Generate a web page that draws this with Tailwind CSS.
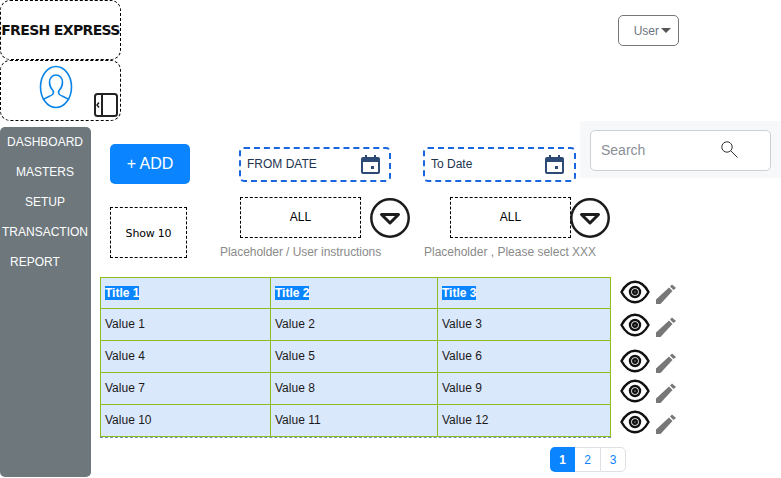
<!DOCTYPE html>
<html>
<head>
<meta charset="utf-8">
<script src="https://cdn.jsdelivr.net/npm/@tailwindcss/browser@4"></script>
</head>
<body class="bg-white">
<div class="w-[781px] h-[478px] overflow-hidden bg-white font-['Liberation_Sans',sans-serif] flex flex-col">
  <!-- top -->
  <div class="flex h-[121px] shrink-0">
    <div class="w-[121px] flex flex-col">
      <div class="h-[60px] border border-dashed border-black rounded-[10px] flex items-center justify-center font-['DejaVu_Sans',sans-serif] font-bold text-[14px] tracking-[-0.65px] text-[#111] whitespace-nowrap">FRESH EXPRESS</div>
      <div class="h-[61px] border border-dashed border-black rounded-[10px] relative flex justify-center pt-[4px] pr-[10px]">
        <svg width="34" height="44" viewBox="0 0 34 44" fill="none" stroke="#0a84e8" stroke-width="1.6">
          <ellipse cx="17" cy="22" rx="15.5" ry="20.5"/>
          <path d="M4 35c3-3 9-4 10-6 .5-1 .5-3-.5-4-2-2-3-5-3-8 0-4 3-7 6.500-7s6.500 3 6.500 7c0 3-1 6-3 8-1 1-1 3-.5 4 1 2 7 3 10 6"/>
        </svg>
        <svg class="absolute left-[92px] top-[31px]" width="26" height="26" viewBox="0 0 26 26" fill="none" stroke="#222" stroke-width="2">
          <rect x="2" y="2" width="22" height="22" rx="2.500"/>
          <path d="M9 2v22"/>
          <path d="M6 10.500 4 13l2 2.500" stroke-width="1.500"/>
        </svg>
      </div>
    </div>
    <div class="ml-[497px] mt-[15px]">
      <div class="w-[61px] h-[31px] border border-[#777] rounded-[5px] flex items-center justify-end pr-[7px] gap-[2px] text-[12px] text-[#6c757d]">
        <span>User</span>
        <span class="w-0 h-0 border-l-[5px] border-r-[5px] border-t-[5px] border-l-transparent border-r-transparent border-t-[#555]"></span>
      </div>
    </div>
  </div>
  <!-- body -->
  <div class="flex flex-1 min-h-0">
    <nav class="w-[91px] h-[350px] mt-[6px] shrink-0 bg-[#6d777c] rounded-[5px] text-white text-[12px] leading-[30px] whitespace-nowrap">
      <div class="h-[30px] pl-[7px]">DASHBOARD</div>
      <div class="h-[30px] pl-[16px]">MASTERS</div>
      <div class="h-[30px] pl-[25px]">SETUP</div>
      <div class="h-[30px] pl-[2px]">TRANSACTION</div>
      <div class="h-[30px] pl-[10px]">REPORT</div>
    </nav>
    <main class="w-[690px] flex flex-col">
      <!-- row 1 -->
      <div class="flex h-[57px] items-start">
        <button class="ml-[19px] mt-[23px] w-[80px] h-[40px] bg-[#0a84ff] rounded-[5px] text-white text-[16px] flex items-center justify-center">+ ADD</button>
        <div class="ml-[49px] mt-[26px] w-[152px] h-[35px] border-2 border-dashed border-[#1a66e0] rounded-[5px] flex items-center justify-between pl-[6px] pr-[9px] text-[12px] text-[#22344f]">
          <span class="mb-[2px]">FROM DATE</span>
          <svg width="19" height="19" viewBox="0 0 19 19" fill="#2c4a75"><path d="M4 0h2v2h7V0h2v2h2a2 2 0 0 1 2 2v13a2 2 0 0 1-2 2H2a2 2 0 0 1-2-2V4a2 2 0 0 1 2-2h2zM2 7v10h15V7z"/><rect x="10" y="11" width="3" height="3"/></svg>
        </div>
        <div class="ml-[32px] mt-[26px] w-[153px] h-[35px] border-2 border-dashed border-[#1a66e0] rounded-[5px] flex items-center justify-between pl-[6px] pr-[10px] text-[12px] text-[#22344f]">
          <span class="mb-[2px]">To Date</span>
          <svg width="19" height="19" viewBox="0 0 19 19" fill="#2c4a75"><path d="M4 0h2v2h7V0h2v2h2a2 2 0 0 1 2 2v13a2 2 0 0 1-2 2H2a2 2 0 0 1-2-2V4a2 2 0 0 1 2-2h2zM2 7v10h15V7z"/><rect x="10" y="11" width="3" height="3"/></svg>
        </div>
        <div class="ml-[4px] w-[201px] h-[57px] bg-[#f7f8fa] pt-[9px] pl-[10px]">
          <div class="w-[181px] h-[41px] bg-white border border-[#ccd0d8] rounded-[5px] flex items-center justify-between pl-[10px] pr-[32px] text-[14px] text-[#8a8f96]">
            <span>Search</span>
            <svg class="mb-[3px]" width="17" height="17" viewBox="0 0 17 17" fill="none" stroke="#333" stroke-width="1"><circle cx="6" cy="6" r="5.200"/><path d="m9.800 9.800 6.700 6.700"/></svg>
          </div>
        </div>
      </div>
      <!-- row 2 -->
      <div class="flex items-start h-[99px]">
        <div class="ml-[19px] mt-[29px] w-[77px] h-[51px] pt-[3px] border border-dashed border-black flex items-center justify-center font-['DejaVu_Sans',sans-serif] text-[11px] tracking-[-0.2px] text-black">Show 10</div>
        <div class="ml-[33px] mt-[19px] relative w-[210px]">
          <div class="flex items-center gap-[9px] ml-[20px]">
            <div class="w-[121px] h-[41px] pb-[2px] border border-dashed border-black flex items-center justify-center text-[12px] text-black">ALL</div>
            <svg width="40" height="40" viewBox="0 0 40 40" fill="none" stroke="#1c1c1c" stroke-width="2.500"><circle cx="20" cy="20" r="18.700"/><path d="M11.500 16.500h17L20 25z" stroke-linejoin="round" stroke-width="3"/></svg>
          </div>
          <div class="mt-[7px] text-[12px] leading-[14px] tracking-[-0.05px] text-[#8a8a8a] whitespace-nowrap">Placeholder / User instructions</div>
        </div>
        <div class="ml-[-6px] mt-[19px] w-[200px]">
          <div class="flex items-center ml-[26px]">
            <div class="w-[121px] h-[41px] pb-[2px] border border-dashed border-black flex items-center justify-center text-[12px] text-black">ALL</div>
            <svg width="40" height="40" viewBox="0 0 40 40" fill="none" stroke="#1c1c1c" stroke-width="2.500" class="ml-[-1px]"><circle cx="20" cy="20" r="18.700"/><path d="M11.500 16.500h17L20 25z" stroke-linejoin="round" stroke-width="3"/></svg>
          </div>
          <div class="mt-[7px] text-[12px] leading-[14px] text-[#8a8a8a] whitespace-nowrap">Placeholder , Please select XXX</div>
        </div>
      </div>
      <!-- table + actions -->
      <div class="flex items-start">
        <div class="ml-[9px] w-[511px] border-b border-r border-dashed border-[#6c8ebf]">
        <table class="w-[510px] table-fixed border-collapse bg-[#dae8fc] text-[12px] text-[#1a1a1a]">
          <colgroup><col class="w-[170px]"><col class="w-[167px]"><col class="w-[173px]"></colgroup>
          <tbody>
            <tr class="h-[31px] font-bold text-white">
              <td class="border border-[#8fbc1e] pl-[4px]"><span class="bg-[#0a84ff]">Title 1</span></td>
              <td class="border border-[#8fbc1e] pl-[4px]"><span class="bg-[#0a84ff]">Title 2</span></td>
              <td class="border border-[#8fbc1e] pl-[4px]"><span class="bg-[#0a84ff]">Title 3</span></td>
            </tr>
            <tr class="h-[32px]"><td class="border border-[#8fbc1e] pl-[4px] pb-[2px]">Value 1</td><td class="border border-[#8fbc1e] pl-[4px] pb-[2px]">Value 2</td><td class="border border-[#8fbc1e] pl-[4px] pb-[2px]">Value 3</td></tr>
            <tr class="h-[32px]"><td class="border border-[#8fbc1e] pl-[4px] pb-[2px]">Value 4</td><td class="border border-[#8fbc1e] pl-[4px] pb-[2px]">Value 5</td><td class="border border-[#8fbc1e] pl-[4px] pb-[2px]">Value 6</td></tr>
            <tr class="h-[32px]"><td class="border border-[#8fbc1e] pl-[4px] pb-[2px]">Value 7</td><td class="border border-[#8fbc1e] pl-[4px] pb-[2px]">Value 8</td><td class="border border-[#8fbc1e] pl-[4px] pb-[2px]">Value 9</td></tr>
            <tr class="h-[32px]"><td class="border border-[#8fbc1e] pl-[4px] pb-[2px]">Value 10</td><td class="border border-[#8fbc1e] pl-[4px] pb-[2px]">Value 11</td><td class="border border-[#8fbc1e] pl-[4px] pb-[2px]">Value 12</td></tr>
          </tbody>
        </table>
        </div>
        <div class="ml-[9px] flex flex-col pt-[3px]">
          <div class="flex items-center gap-[6px] h-[24px]"><svg width="30" height="24" viewBox="0 0 30 24" fill="none" stroke="#111" stroke-width="2.400"><path d="M1.500 12C5 5.500 9.500 1.800 15 1.800S25 5.500 28.500 12C25 18.500 20.500 22.200 15 22.200S5 18.500 1.500 12z"/><circle cx="15" cy="12" r="5"/><circle cx="15" cy="12" r="1.800"/></svg><svg class="mt-[3px]" width="20" height="20" viewBox="0 0 20 20" fill="#777"><path d="M0 20v-4.500L13 3.500 16.500 7 4.500 20z"/><path d="M14 2.500 16 .5 20 4l-2.500 2z"/></svg></div>
          <div class="flex items-center gap-[6px] h-[24px] mt-[9px]"><svg width="30" height="24" viewBox="0 0 30 24" fill="none" stroke="#111" stroke-width="2.400"><path d="M1.500 12C5 5.500 9.500 1.800 15 1.800S25 5.500 28.500 12C25 18.500 20.500 22.200 15 22.200S5 18.500 1.500 12z"/><circle cx="15" cy="12" r="5"/><circle cx="15" cy="12" r="1.800"/></svg><svg class="mt-[3px]" width="20" height="20" viewBox="0 0 20 20" fill="#777"><path d="M0 20v-4.500L13 3.500 16.500 7 4.500 20z"/><path d="M14 2.500 16 .5 20 4l-2.500 2z"/></svg></div>
          <div class="flex items-center gap-[6px] h-[24px] mt-[12px]"><svg width="30" height="24" viewBox="0 0 30 24" fill="none" stroke="#111" stroke-width="2.400"><path d="M1.500 12C5 5.500 9.500 1.800 15 1.800S25 5.500 28.500 12C25 18.500 20.500 22.200 15 22.200S5 18.500 1.500 12z"/><circle cx="15" cy="12" r="5"/><circle cx="15" cy="12" r="1.800"/></svg><svg class="mt-[3px]" width="20" height="20" viewBox="0 0 20 20" fill="#777"><path d="M0 20v-4.500L13 3.500 16.500 7 4.500 20z"/><path d="M14 2.500 16 .5 20 4l-2.500 2z"/></svg></div>
          <div class="flex items-center gap-[6px] h-[24px] mt-[6px]"><svg width="30" height="24" viewBox="0 0 30 24" fill="none" stroke="#111" stroke-width="2.400"><path d="M1.500 12C5 5.500 9.500 1.800 15 1.800S25 5.500 28.500 12C25 18.500 20.500 22.200 15 22.200S5 18.500 1.500 12z"/><circle cx="15" cy="12" r="5"/><circle cx="15" cy="12" r="1.800"/></svg><svg class="mt-[3px]" width="20" height="20" viewBox="0 0 20 20" fill="#777"><path d="M0 20v-4.500L13 3.500 16.500 7 4.500 20z"/><path d="M14 2.500 16 .5 20 4l-2.500 2z"/></svg></div>
          <div class="flex items-center gap-[6px] h-[24px] mt-[7px]"><svg width="30" height="24" viewBox="0 0 30 24" fill="none" stroke="#111" stroke-width="2.400"><path d="M1.500 12C5 5.500 9.500 1.800 15 1.800S25 5.500 28.500 12C25 18.500 20.500 22.200 15 22.200S5 18.500 1.500 12z"/><circle cx="15" cy="12" r="5"/><circle cx="15" cy="12" r="1.800"/></svg><svg class="mt-[3px]" width="20" height="20" viewBox="0 0 20 20" fill="#777"><path d="M0 20v-4.500L13 3.500 16.500 7 4.500 20z"/><path d="M14 2.500 16 .5 20 4l-2.500 2z"/></svg></div>
        </div>
      </div>
      <!-- pagination -->
      <div class="ml-[459px] mt-[9px] flex w-[76px] h-[25px] text-[12px] font-bold">
        <div class="w-[25px] bg-[#0a84ff] text-white rounded-l-[5px] flex items-center justify-center">1</div>
        <div class="w-[25px] border-y border-[#dde1e6] text-[#0a84ff] font-normal flex items-center justify-center">2</div>
        <div class="w-[26px] border border-[#dde1e6] text-[#0a84ff] font-normal rounded-r-[5px] flex items-center justify-center">3</div>
      </div>
    </main>
  </div>
</div>
</body>
</html>
